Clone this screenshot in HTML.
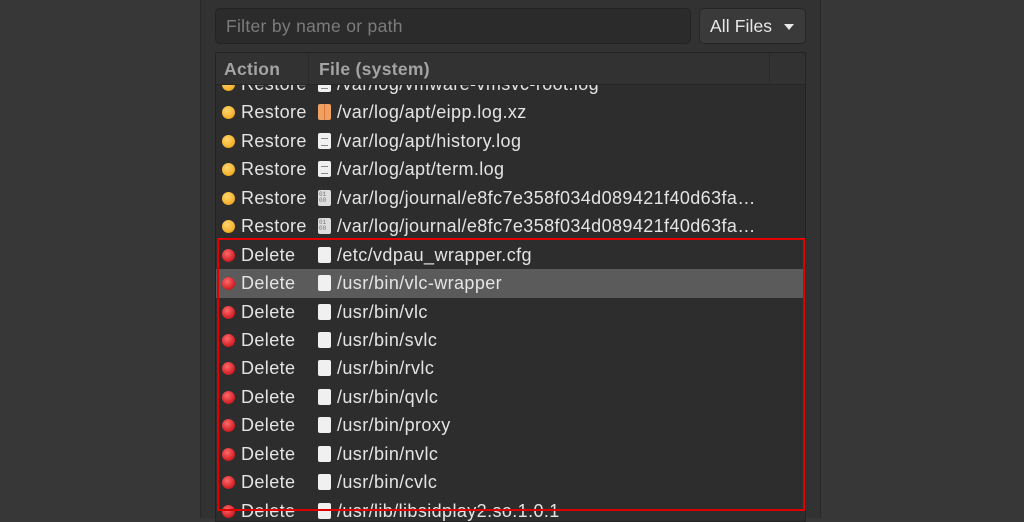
<!DOCTYPE html>
<html><head><style>
*{margin:0;padding:0;box-sizing:border-box}
body{width:1024px;height:514px;background:#373737;position:relative;overflow:hidden;font-family:"Liberation Sans",sans-serif;font-size:18px;letter-spacing:0.4px;color:#e4e4e4}
.panel{position:absolute;left:200px;top:-2px;width:621px;height:520px;background:#323232;border-left:1px solid #282828;border-right:1px solid #282828}
.filter{position:absolute;left:215px;top:8px;width:476px;height:36px;background:#2b2b2b;border:1px solid #232323;border-radius:5px;color:#7c7c7c;padding:7px 10px;font-size:17.5px;letter-spacing:0.3px}
.btn{position:absolute;left:699px;top:8px;width:107px;height:36px;background:#3a3a3a;border:1px solid #252525;border-radius:5px;color:#e8e8e8;padding:7px 10px;font-size:17.5px;letter-spacing:0.1px}
.btn:after{content:"";position:absolute;right:11px;top:15px;border-left:5px solid transparent;border-right:5px solid transparent;border-top:6px solid #e8e8e8}
.list{position:absolute;left:215px;top:52px;width:591px;height:470px;background:#2d2d2d;border:1px solid #232323;overflow:hidden}
.hdr{position:absolute;left:0;top:0;width:100%;height:32px;background:#323232;border-bottom:1px solid #262626;font-weight:bold;color:#a4a4a4;z-index:2;font-size:17.5px;letter-spacing:0.3px}
.hdr span{position:absolute;top:6px}
.row{position:absolute;left:0;width:589px;height:28.5px}
.row.sel{background:#5b5b5b}
.dot{position:absolute;left:6px;top:8px;width:13px;height:13px;border-radius:50%}
.y{background:radial-gradient(circle at 40% 35%,#ffd770,#f5b430 60%,#c98a10)}
.r{background:radial-gradient(circle at 40% 35%,#ff6a6a,#d8262c 60%,#8e1014)}
.act{position:absolute;left:25px;top:4px}
.ic{position:absolute;left:102px;top:6px;width:13px;height:16px;background:#f0f0f0;border-radius:2px}
.ic.t:after{content:"";position:absolute;left:3px;top:5px;width:7px;height:6px;border-top:1px solid #888;border-bottom:1px solid #888}
.ic.x{background:linear-gradient(90deg,#f0a060 45%,#d77a3a 45%,#d77a3a 55%,#f0a060 55%)}
.ic.b{background:#ddd;font-size:6px;color:#777;line-height:6px;padding:2px 1px;letter-spacing:0;font-family:"Liberation Mono",monospace}
.fn{position:absolute;left:121px;top:4px;white-space:nowrap}
.redbox{position:absolute;left:217px;top:238px;width:588px;height:273px;border:2px solid #e00000;z-index:3}
</style></head><body>
<div class="panel"></div>
<div class="filter">Filter by name or path</div>
<div class="btn">All Files</div>
<div class="list">
<div class="hdr"><span style="left:8px">Action</span><span style="left:103px">File (system)</span>
<div style="position:absolute;left:92px;top:0;width:1px;height:32px;background:#2a2a2a"></div>
<div style="position:absolute;left:553px;top:0;width:1px;height:32px;background:#2a2a2a"></div></div>
<div class="row" style="top:16.8px"><div class="dot y"></div><div class="act">Restore</div><div class="ic t"></div><div class="fn">/var/log/vmware-vmsvc-root.log</div></div>
<div class="row" style="top:45.3px"><div class="dot y"></div><div class="act">Restore</div><div class="ic x"></div><div class="fn">/var/log/apt/eipp.log.xz</div></div>
<div class="row" style="top:73.8px"><div class="dot y"></div><div class="act">Restore</div><div class="ic t"></div><div class="fn">/var/log/apt/history.log</div></div>
<div class="row" style="top:102.2px"><div class="dot y"></div><div class="act">Restore</div><div class="ic t"></div><div class="fn">/var/log/apt/term.log</div></div>
<div class="row" style="top:130.7px"><div class="dot y"></div><div class="act">Restore</div><div class="ic b">01<br>00</div><div class="fn">/var/log/journal/e8fc7e358f034d089421f40d63fa…</div></div>
<div class="row" style="top:159.1px"><div class="dot y"></div><div class="act">Restore</div><div class="ic b">01<br>00</div><div class="fn">/var/log/journal/e8fc7e358f034d089421f40d63fa…</div></div>
<div class="row" style="top:187.6px"><div class="dot r"></div><div class="act">Delete</div><div class="ic"></div><div class="fn">/etc/vdpau_wrapper.cfg</div></div>
<div class="row sel" style="top:216px"><div class="dot r"></div><div class="act">Delete</div><div class="ic"></div><div class="fn">/usr/bin/vlc-wrapper</div></div>
<div class="row" style="top:244.5px"><div class="dot r"></div><div class="act">Delete</div><div class="ic"></div><div class="fn">/usr/bin/vlc</div></div>
<div class="row" style="top:273px"><div class="dot r"></div><div class="act">Delete</div><div class="ic"></div><div class="fn">/usr/bin/svlc</div></div>
<div class="row" style="top:301.4px"><div class="dot r"></div><div class="act">Delete</div><div class="ic"></div><div class="fn">/usr/bin/rvlc</div></div>
<div class="row" style="top:329.9px"><div class="dot r"></div><div class="act">Delete</div><div class="ic"></div><div class="fn">/usr/bin/qvlc</div></div>
<div class="row" style="top:358.3px"><div class="dot r"></div><div class="act">Delete</div><div class="ic"></div><div class="fn">/usr/bin/proxy</div></div>
<div class="row" style="top:386.8px"><div class="dot r"></div><div class="act">Delete</div><div class="ic"></div><div class="fn">/usr/bin/nvlc</div></div>
<div class="row" style="top:415.2px"><div class="dot r"></div><div class="act">Delete</div><div class="ic"></div><div class="fn">/usr/bin/cvlc</div></div>
<div class="row" style="top:443.7px"><div class="dot r"></div><div class="act">Delete</div><div class="ic"></div><div class="fn">/usr/lib/libsidplay2.so.1.0.1</div></div>
</div>
<div class="redbox"></div>
</body></html>
